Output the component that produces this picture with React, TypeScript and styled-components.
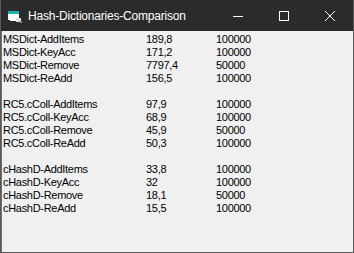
import styled, { createGlobalStyle } from 'styled-components'

const Global = createGlobalStyle`
  html, body {
    margin: 0;
    padding: 0;
    background: #2b2b2b;
  }
`

const Frame = styled.div`
  width: 354px;
  height: 253px;
  box-sizing: border-box;
  border: 1px solid #5a5a5a;
  border-top: none;
  display: flex;
  flex-direction: column;
  background: #2b2b2b;
`

const TitleBar = styled.div`
  height: 31px;
  display: flex;
  align-items: center;
  flex-shrink: 0;
`

const AppIcon = styled.div`
  width: 16px;
  height: 16px;
  margin-left: 6px;
  margin-right: 5px;
  display: flex;
`

const Title = styled.div`
  flex: 1;
  color: #ffffff;
  font-family: 'Liberation Sans', 'Segoe UI', sans-serif;
  font-size: 12px;
  letter-spacing: -0.2px;
`

const CaptionButton = styled.div`
  width: 46px;
  height: 31px;
  display: flex;
  align-items: center;
  justify-content: center;
`

const Client = styled.div`
  flex: 1;
  background: #f0f0f0;
  border-left: 1px solid #6e6e6e;
  padding-top: 2px;
  padding-left: 1px;
  font-family: 'Liberation Sans', Arial, sans-serif;
  font-size: 11px;
  letter-spacing: -0.3px;
  color: #000;
`

const Row = styled.div`
  height: 13px;
  line-height: 13px;
  display: grid;
  grid-template-columns: 143px 70px 1fr;
  white-space: nowrap;
`

const Cell = styled.span``

type Item = [string, string, string] | null

const rows: Item[] = [
  ['MSDict-AddItems', '189,8', '100000'],
  ['MSDict-KeyAcc', '171,2', '100000'],
  ['MSDict-Remove', '7797,4', '50000'],
  ['MSDict-ReAdd', '156,5', '100000'],
  null,
  ['RC5.cColl-AddItems', '97,9', '100000'],
  ['RC5.cColl-KeyAcc', '68,9', '100000'],
  ['RC5.cColl-Remove', '45,9', '50000'],
  ['RC5.cColl-ReAdd', '50,3', '100000'],
  null,
  ['cHashD-AddItems', '33,8', '100000'],
  ['cHashD-KeyAcc', '32', '100000'],
  ['cHashD-Remove', '18,1', '50000'],
  ['cHashD-ReAdd', '15,5', '100000'],
]

export default function App() {
  return (
    <>
      <Global />
      <Frame>
        <TitleBar>
          <AppIcon>
            <svg width="16" height="16" viewBox="0 0 16 16">
              <rect x="1" y="3" width="11" height="9" fill="#ffffff" />
              <rect x="1" y="3" width="11" height="3" fill="#1fb3a8" />
              <rect x="3" y="8" width="9" height="5" fill="#ffffff" />
              <rect x="9" y="10" width="5" height="4" fill="#dcdcdc" />
              <rect x="13" y="13" width="2" height="2" fill="#888" />
            </svg>
          </AppIcon>
          <Title>Hash-Dictionaries-Comparison</Title>
          <CaptionButton>
            <svg width="10" height="10" viewBox="0 0 10 10">
              <line x1="0" y1="5.5" x2="10" y2="5.5" stroke="#fff" strokeWidth="1" />
            </svg>
          </CaptionButton>
          <CaptionButton>
            <svg width="10" height="10" viewBox="0 0 10 10">
              <rect x="0.5" y="0.5" width="9" height="9" fill="none" stroke="#fff" strokeWidth="1" />
            </svg>
          </CaptionButton>
          <CaptionButton>
            <svg width="10" height="10" viewBox="0 0 10 10">
              <path d="M0 0 L10 10 M10 0 L0 10" stroke="#fff" strokeWidth="1" />
            </svg>
          </CaptionButton>
        </TitleBar>
        <Client>
          {rows.map((r, i) =>
            r ? (
              <Row key={i}>
                <Cell>{r[0]}</Cell>
                <Cell>{r[1]}</Cell>
                <Cell>{r[2]}</Cell>
              </Row>
            ) : (
              <Row key={i} />
            )
          )}
        </Client>
      </Frame>
    </>
  )
}
